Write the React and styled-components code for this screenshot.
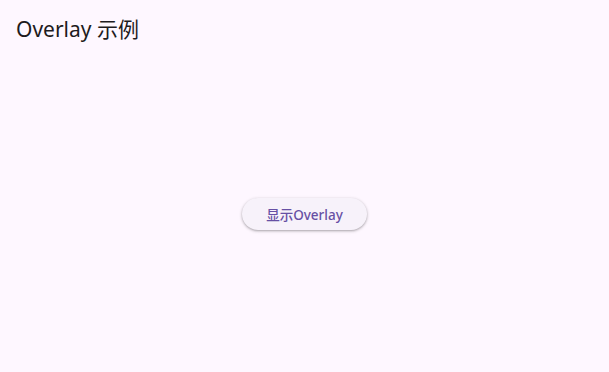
import React from "react";
import styled, { createGlobalStyle } from "styled-components";

const Global = createGlobalStyle`
  html, body { margin: 0; padding: 0; background: #fef7ff; }
  body { font-family: "Noto Sans", "Noto Sans CJK SC", sans-serif; }
`;

const Page = styled.div`
  display: flex;
  flex-direction: column;
  height: 372px;
  background: #fef7ff;
`;

const AppBar = styled.header`
  height: 56px;
  display: flex;
  align-items: center;
  padding: 0 16px;
  flex-shrink: 0;
`;

const Title = styled.h1`
  margin: 0;
  font-size: 21px;
  font-weight: 400;
  color: #1d1b20;
  font-family: "Noto Sans", "Noto Sans CJK SC", sans-serif;
`;

const Body = styled.main`
  flex: 1;
  display: flex;
  align-items: center;
  justify-content: center;
`;

const Button = styled.button`
  height: 32px;
  padding: 0 24px;
  border: none;
  border-radius: 16px;
  background: #f7f2fa;
  color: #6750a4;
  font-family: "Noto Sans", "Noto Sans CJK SC", sans-serif;
  font-size: 13.5px;
  font-weight: 500;
  box-shadow: 0 1px 2px rgba(0,0,0,0.22), 0 1px 3px 1px rgba(0,0,0,0.1);
  cursor: pointer;
`;

export default function App() {
  return (
    <>
      <Global />
      <Page>
        <AppBar>
          <Title>Overlay 示例</Title>
        </AppBar>
        <Body>
          <Button>显示Overlay</Button>
        </Body>
      </Page>
    </>
  );
}
